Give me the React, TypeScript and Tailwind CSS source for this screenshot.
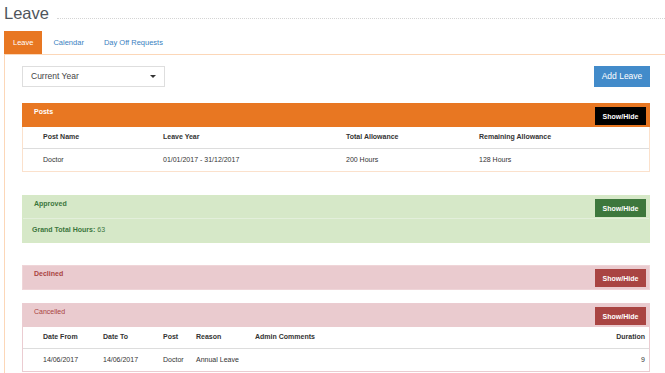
import React from 'react';

const font = "font-['Liberation_Sans',Arial,sans-serif]";

function ShowHide({ color }: { color: string }) {
    return (
        <button className={`mt-[3px] mr-[3px] h-[18px] w-[51px] text-[7px] font-bold text-white leading-none ${color}`}>
            Show/Hide
        </button>
    );
}

export default function App() {
    return (
        <div className={`w-[665px] h-[373px] overflow-hidden bg-white text-[#333] ${font}`}>
            {/* title */}
            <div className="flex pt-[3px] pl-[4px] h-[31px]">
                <span className="text-[16.5px] leading-[20px] h-[20px] text-[#4f555c]">Leave</span>
                <div className="flex-1 ml-[8px] h-[16px] border-b border-dotted border-[#d4d4d4]" />
            </div>

            {/* tabs */}
            <div className="flex pl-[4px] h-[23px] text-[7.5px]">
                <div className="flex items-center px-[9px] bg-[#e87722] text-white">Leave</div>
                <div className="flex items-center px-[9px] ml-[2px] text-[#3a7fc1]">Calendar</div>
                <div className="flex items-center px-[9px] ml-[2px] text-[#3a7fc1]">Day Off Requests</div>
            </div>

            <div className="ml-[4px] border-l border-t border-[#fcd7b8] h-[320px]">
                <div className="flex justify-between items-start pl-[17px] pr-[15px] pt-[11px]">
                    <div className="flex items-center justify-between w-[143px] h-[21px] border border-[#dedede] pl-[8px] pr-[8px] text-[8.5px] text-[#444]">
                        <span>Current Year</span>
                        <span className="w-0 h-0 border-l-[3px] border-r-[3px] border-t-[3px] border-l-transparent border-r-transparent border-t-[#333]" />
                    </div>
                    <button className="w-[56px] h-[21px] bg-[#428bca] text-white text-[8.5px]">Add Leave</button>
                </div>

                <div className="pl-[17px] pr-[15px] text-[7px]">
                    {/* posts */}
                    <div className="mt-[16px] border border-[#fbe1cc]">
                        <div className="-mt-px -mx-px flex justify-between h-[24px] bg-[#e87722]">
                            <span className="pl-[12px] pt-[4px] font-bold text-white leading-[10px]">Posts</span>
                            <ShowHide color="bg-black mt-[4px] mr-[4px]" />
                        </div>
                        <div className="grid grid-cols-[120px_183px_133px_1fr] pl-[20px] h-[22px] items-center font-bold border-b border-[#dddddd]">
                            <span>Post Name</span>
                            <span>Leave Year</span>
                            <span>Total Allowance</span>
                            <span>Remaining Allowance</span>
                        </div>
                        <div className="grid grid-cols-[120px_183px_133px_1fr] pl-[20px] h-[22px] items-center">
                            <span>Doctor</span>
                            <span>01/01/2017 - 31/12/2017</span>
                            <span>200 Hours</span>
                            <span>128 Hours</span>
                        </div>
                    </div>

                    {/* approved */}
                    <div className="mt-[23px] border border-[#d6e9c6] bg-[#d6e8c8]">
                        <div className="flex justify-between h-[23px] border-b border-[#e3efdb]">
                            <span className="pl-[11px] pt-[3px] font-bold text-[#3c763d] leading-[10px]">Approved</span>
                            <ShowHide color="bg-[#3d773d]" />
                        </div>
                        <div className="h-[23px] flex items-center pl-[9px] text-[#3c763d]">
                            <span className="font-bold">Grand Total Hours:</span>
                            <span className="ml-[2px]">63</span>
                        </div>
                    </div>

                    {/* declined */}
                    <div className="mt-[22px] border border-[#efd5d8] bg-[#eacbcf]">
                        <div className="flex justify-between h-[23px]">
                            <span className="pl-[11px] pt-[3px] font-bold text-[#a94442] leading-[10px]">Declined</span>
                            <ShowHide color="bg-[#a94442]" />
                        </div>
                    </div>

                    {/* cancelled */}
                    <div className="mt-[13px] border border-[#ebccd1]">
                        <div className="flex justify-between h-[23px] bg-[#eacbcf]">
                            <span className="pl-[11px] pt-[3px] text-[#a94442] leading-[10px]">Cancelled</span>
                            <ShowHide color="bg-[#a94442]" />
                        </div>
                        <div className="grid grid-cols-[60px_60px_33px_59px_1fr_auto] pl-[20px] pr-[4px] h-[22px] items-center font-bold border-b border-[#dddddd]">
                            <span>Date From</span>
                            <span>Date To</span>
                            <span>Post</span>
                            <span>Reason</span>
                            <span>Admin Comments</span>
                            <span className="text-right">Duration</span>
                        </div>
                        <div className="grid grid-cols-[60px_60px_33px_59px_1fr_auto] pl-[20px] pr-[4px] h-[22px] items-center">
                            <span>14/06/2017</span>
                            <span>14/06/2017</span>
                            <span>Doctor</span>
                            <span>Annual Leave</span>
                            <span></span>
                            <span className="text-right">9</span>
                        </div>
                    </div>
                </div>
            </div>
        </div>
    );
}
